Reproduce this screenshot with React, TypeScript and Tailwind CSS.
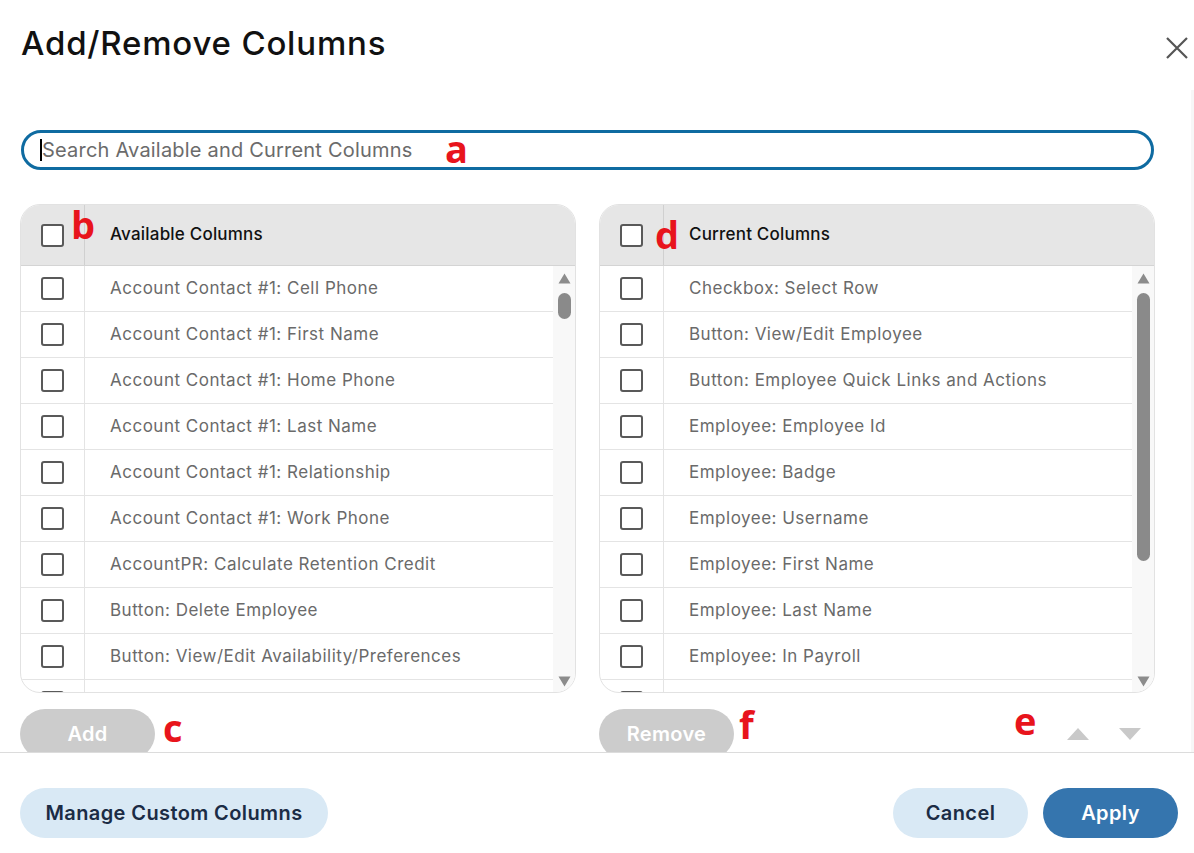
import React from 'react';

type ColumnListProps = {
    title: string
    items: string[]
    thumbHeight: string
}

// the last entry of each list is the row cut off at the bottom edge
const available = [
    'Account Contact #1: Cell Phone',
    'Account Contact #1: First Name',
    'Account Contact #1: Home Phone',
    'Account Contact #1: Last Name',
    'Account Contact #1: Relationship',
    'Account Contact #1: Work Phone',
    'AccountPR: Calculate Retention Credit',
    'Button: Delete Employee',
    'Button: View/Edit Availability/Preferences',
    '',
]

const current = [
    'Checkbox: Select Row',
    'Button: View/Edit Employee',
    'Button: Employee Quick Links and Actions',
    'Employee: Employee Id',
    'Employee: Badge',
    'Employee: Username',
    'Employee: First Name',
    'Employee: Last Name',
    'Employee: In Payroll',
    '',
]

const Box = () => (
    <div className="w-[23px] h-[23px] rounded-[3px] border-2 border-[#595959] bg-white" />
)

const Tri = ({ up, color }: { up: boolean, color: string }) => (
    <svg width="13" height="11" viewBox="0 0 13 11">
        <polygon points={up ? '6.5,0.5 12.5,10.5 0.5,10.5' : '0.5,0.5 12.5,0.5 6.5,10.5'} fill={color} />
    </svg>
)

const ColumnList: React.FC<ColumnListProps> = ({ title, items, thumbHeight }) => {
    return (
        <div className="w-[556px] h-[489px] border border-[#e2e2e2] rounded-[20px] overflow-hidden flex flex-col bg-white">
            <div className="h-[61px] shrink-0 flex bg-[#e6e6e6] border-b border-[#d4d4d4]">
                <div className="w-[64px] shrink-0 flex items-center justify-center border-r border-[#d0d0d0]">
                    <Box />
                </div>
                <div className="flex items-center pl-[25px] text-[17px] font-medium text-[#111] tracking-[0.2px]">{title}</div>
            </div>
            <div className="flex-1 flex min-h-0">
                <div className="flex-1 overflow-hidden">
                    {items.map((item, i) => (
                        <div key={i} className="h-[46px] flex border-b border-[#e4e4e4]">
                            <div className="w-[64px] shrink-0 flex items-center justify-center border-r border-[#e4e4e4]">
                                <Box />
                            </div>
                            <div className="flex items-center pl-[25px] text-[17px] text-[#6a6a6a] whitespace-nowrap tracking-[0.5px]">{item}</div>
                        </div>
                    ))}
                </div>
                <div className="w-[22px] shrink-0 bg-[#f8f8f8] flex flex-col items-center pt-[7px] pb-[5px]">
                    <Tri up color="#8c8c8c" />
                    <div className={`mt-[9px] w-[13px] rounded-full bg-[#8a8a8a] ${thumbHeight}`} />
                    <div className="flex-1" />
                    <Tri up={false} color="#8c8c8c" />
                </div>
            </div>
        </div>
    )
}

// the red letters laid over the screenshot
const Mark = ({ text, className }: { text: string, className: string }) => (
    <span className={`absolute font-['Open_Sans',sans-serif] font-bold text-[38px] leading-[44px] text-[#e8141c] ${className}`}>{text}</span>
)

const App: React.FC = () => {
    return (
        <div className="w-[1194px] h-[853px] bg-white flex flex-col overflow-hidden relative font-['Inter',sans-serif]">
            <div className="h-[90px] shrink-0 flex items-start px-[21px] pt-[23px]">
                <h1 className="text-[33px] leading-[40px] font-medium text-[#111] tracking-[0.8px]">Add/Remove Columns</h1>
                <button className="ml-auto mr-[-16px] mt-[13px]">
                    <svg width="24" height="24" viewBox="0 0 24 24">
                        <path d="M2 2 L22 22 M22 2 L2 22" stroke="#555" strokeWidth="2.2" />
                    </svg>
                </button>
            </div>

            <div className="h-[662px] shrink-0 flex overflow-hidden">
                <div className="flex-1 flex flex-col px-[20px] pt-[40px]">
                    <div className="ml-[1px] w-[1133px] h-[40px] shrink-0 rounded-full border-[3px] border-[#0f6ba1] flex items-center pl-[16px]">
                        <span className="w-[2px] h-[22px] bg-black" />
                        <span className="text-[20px] text-[#6b6b6b] tracking-[0.2px]">Search Available and Current Columns</span>
                    </div>
                    <div className="mt-[34px] flex gap-[23px]">
                        <ColumnList title="Available Columns" items={available} thumbHeight="h-[26px]" />
                        <ColumnList title="Current Columns" items={current} thumbHeight="h-[268px]" />
                    </div>
                    <div className="mt-[16px] flex">
                        <div className="w-[579px] shrink-0">
                            <button className="w-[135px] h-[50px] rounded-full bg-[#cccccc] text-white text-[20px] font-semibold tracking-[0.3px]">Add</button>
                        </div>
                        <button className="w-[135px] h-[50px] rounded-full bg-[#cccccc] text-white text-[20px] font-semibold tracking-[0.3px]">Remove</button>
                        <div className="ml-auto mr-[30px] mt-[19px] flex gap-[30px] h-[13px]">
                            <svg width="22" height="12" viewBox="0 0 22 12"><polygon points="11,0 22,12 0,12" fill="#c9c9c9" /></svg>
                            <svg width="22" height="12" viewBox="0 0 22 12"><polygon points="0,0 22,0 11,12" fill="#c9c9c9" /></svg>
                        </div>
                    </div>
                </div>
                <div className="w-[3px] shrink-0 bg-[#f7f7f7]" />
            </div>

            <div className="flex-1 border-t border-[#dcdcdc] flex items-start px-[20px] pt-[35px]">
                <button className="w-[308px] h-[50px] rounded-full bg-[#d9e9f5] text-[#1b2c45] text-[20px] font-semibold tracking-[0.4px]">Manage Custom Columns</button>
                <button className="ml-auto w-[135px] h-[50px] rounded-full bg-[#d9e9f5] text-[#1b2c45] text-[20px] font-semibold tracking-[0.4px]">Cancel</button>
                <button className="ml-[15px] mr-[-4px] w-[135px] h-[50px] rounded-full bg-[#3575ae] text-white text-[20px] font-semibold tracking-[0.4px]">Apply</button>
            </div>

            <Mark text="a" className="left-[445px] top-[126px]" />
            <Mark text="b" className="left-[71px] top-[202px]" />
            <Mark text="d" className="left-[655px] top-[212px]" />
            <Mark text="c" className="left-[163px] top-[705px]" />
            <Mark text="f" className="left-[739px] top-[702px]" />
            <Mark text="e" className="left-[1014px] top-[698px]" />
        </div>
    )
}

export default App;
